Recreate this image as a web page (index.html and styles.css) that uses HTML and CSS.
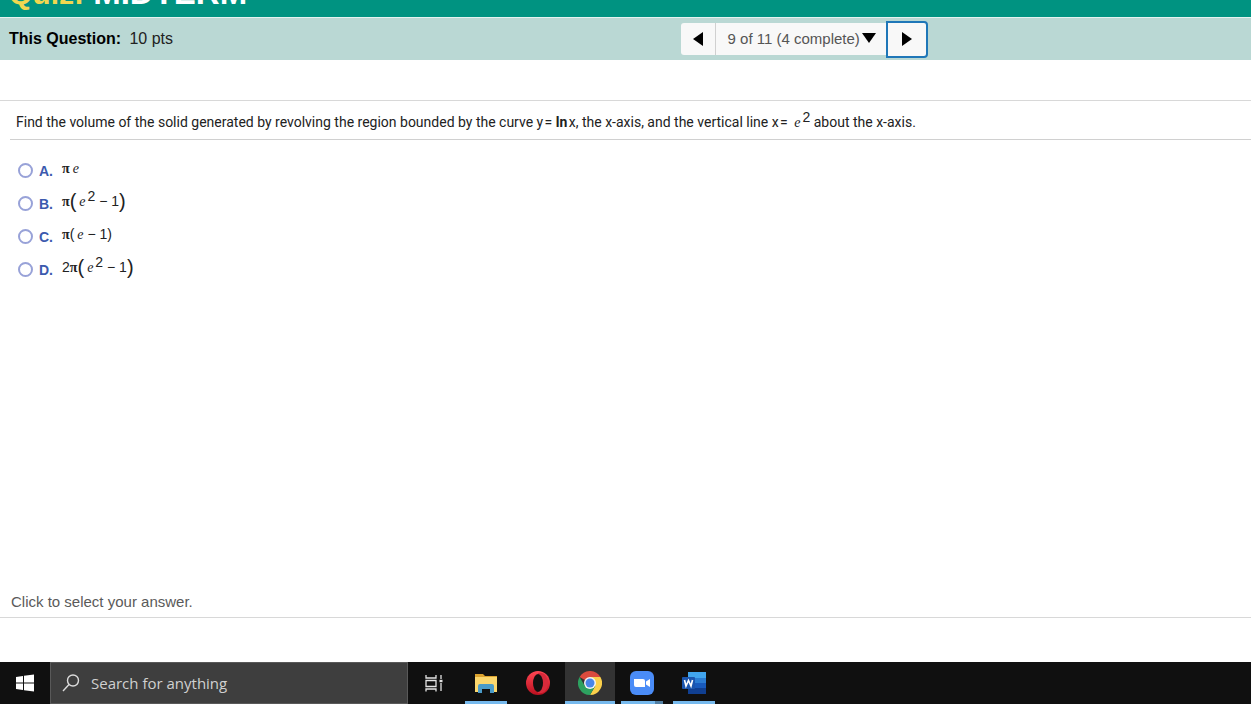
FILE: index.html
```html
<!DOCTYPE html>
<html lang="en">
  <head>
    <meta charset="UTF-8" />
    <meta name="viewport" content="width=device-width, initial-scale=1.0" />
    <title>Quiz: MIDTERM</title>
    <link rel="stylesheet" href="styles.css">
  </head>
  <body>
    <header class="quiz-header">
      <h1><span class="quiz-label">Quiz:</span> MIDTERM</h1>
    </header>

    <div class="question-bar">
      <p class="question-points"><strong>This Question:</strong> 10 pts</p>
      <nav class="question-nav">
        <button type="button" class="nav-prev" aria-label="Previous question">
          <svg width="10" height="14" viewBox="0 0 10 14"><path d="M10 0v14L0 7z" /></svg>
        </button>
        <button type="button" class="nav-list">
          9 of 11 (4 complete)
          <svg width="14" height="10" viewBox="0 0 14 10"><path d="M0 0h14L7 10z" /></svg>
        </button>
        <button type="button" class="nav-next" aria-label="Next question">
          <svg width="10" height="14" viewBox="0 0 10 14"><path d="M0 0v14l10-7z" /></svg>
        </button>
      </nav>
    </div>

    <main class="question">
      <p class="question-text">
        Find the volume of the solid generated by revolving the region bounded by the curve y&#8202;= <b>ln</b>&#8202;x, the x-axis, and the vertical line x&#8202;= <i>e</i><sup>2</sup> about the x-axis.
      </p>

      <form class="choices">
        <div class="choice">
          <input type="radio" name="answer" id="choiceA" />
          <label for="choiceA"><b>A.</b> <span class="math"><span class="pi">π</span><i>e</i></span></label>
        </div>
        <div class="choice">
          <input type="radio" name="answer" id="choiceB" />
          <label for="choiceB"><b>B.</b> <span class="math"><span class="pi">π</span><span class="paren">(</span><i>e</i><sup>2</sup> − 1<span class="paren">)</span></span></label>
        </div>
        <div class="choice">
          <input type="radio" name="answer" id="choiceC" />
          <label for="choiceC"><b>C.</b> <span class="math"><span class="pi">π</span>(<i>e</i> − 1)</span></label>
        </div>
        <div class="choice">
          <input type="radio" name="answer" id="choiceD" />
          <label for="choiceD"><b>D.</b> <span class="math">2<span class="pi">π</span><span class="paren">(</span><i>e</i><sup>2</sup> − 1<span class="paren">)</span></span></label>
        </div>
      </form>

      <p class="hint">Click to select your answer.</p>
    </main>

    <footer class="taskbar">
      <button type="button" class="start" aria-label="Start">
        <svg width="18" height="18" viewBox="0 0 18 18" fill="#fff">
          <path d="M0 3l7-1v6.500H0zM8 1.800L18 .5v8H8zM0 9.500h7V16l-7-1zM8 9.500h10v8L8 16.200z" />
        </svg>
      </button>
      <div class="search">
        <label for="search" aria-label="Search">
          <svg width="18" height="18" viewBox="0 0 18 18" fill="none" stroke="#dcdcdc" stroke-width="1.400">
            <circle cx="11" cy="6.500" r="5.500" />
            <path d="M7 10.500L1 17" />
          </svg>
        </label>
        <input type="text" id="search" placeholder="Search for anything" />
      </div>
      <div class="apps">
        <button type="button" class="app" aria-label="Task View">
          <svg width="20" height="20" viewBox="0 0 20 20" fill="none" stroke="#e4e4e4" stroke-width="1.300">
            <path d="M2 2v3h10V2M2 7.500h10v6H2zM2 18.500v-2.500h10v2.500M17 2v4M17 10v8" />
            <path d="M15.500 8h3" stroke-width="2.400" />
          </svg>
        </button>
        <button type="button" class="app open" aria-label="File Explorer">
          <svg width="24" height="20" viewBox="0 0 24 20">
            <path d="M1 1h8l2 2h12v3H1z" fill="#dca32f" />
            <path d="M1 4h22v15H1z" fill="#fbd76d" />
            <path d="M4 20v-7q0-2 2-2h12q2 0 2 2v7h-4v-4H8v4z" fill="#4a9bc9" />
            <path d="M8 16h8v4H8z" fill="#101010" />
          </svg>
        </button>
        <button type="button" class="app" aria-label="Opera">
          <svg width="24" height="24" viewBox="0 0 24 24">
            <defs>
              <linearGradient id="operaRed" x2="0" y2="1">
                <stop stop-color="#ff4653" />
                <stop offset="1" stop-color="#b9101f" />
              </linearGradient>
            </defs>
            <circle cx="12" cy="12" r="12" fill="url(#operaRed)" />
            <path d="M12 2q5-1 8 3a10 12 0 0 1 0 14q-3 4-8 3z" fill="#d72a3b" />
            <ellipse cx="12" cy="12" rx="5" ry="9" fill="#101010" />
          </svg>
        </button>
        <button type="button" class="app open active" aria-label="Chrome">
          <svg width="24" height="24" viewBox="0 0 24 24">
            <path d="M12 12L1.600 6A12 12 0 0 1 22.400 6z" fill="#db4b3e" />
            <path d="M12 6h10.400A12 12 0 0 1 12 24l5.200-9z" fill="#fbd04b" />
            <path d="M6.800 15L1.600 6A12 12 0 0 0 12 24l5.200-9z" fill="#2da160" />
            <circle cx="12" cy="12" r="6" fill="#f4f4f4" />
            <circle cx="12" cy="12" r="4.500" fill="#4a86e8" />
          </svg>
        </button>
        <button type="button" class="app open stacked" aria-label="Zoom">
          <svg width="24" height="24" viewBox="0 0 24 24">
            <rect width="24" height="24" rx="6" fill="#4a8cf7" />
            <path d="M4 8h9q2 0 2 2v6H6q-2 0-2-2z" fill="#fff" />
            <path d="M16 10.500L20 8v8l-4-2.500z" fill="#fff" />
          </svg>
        </button>
        <button type="button" class="app open" aria-label="Word">
          <svg width="24" height="24" viewBox="0 0 24 24">
            <path d="M6 1h18v6H6z" fill="#41a5ee" />
            <path d="M6 7h18v5H6z" fill="#2b7cd3" />
            <path d="M6 12h18v5H6z" fill="#185abd" />
            <path d="M6 17h18v6H6z" fill="#103f91" />
            <rect y="6" width="13" height="12" rx="1" fill="#1b55ae" />
            <path d="M2.500 9l1.500 6L6.500 9.500 9 15l1.500-6" fill="none" stroke="#fff" stroke-width="1.600" />
          </svg>
        </button>
      </div>
    </footer>
  </body>
</html>
```

FILE: styles.css
```css
* {
  box-sizing: border-box;
}

body {
  display: flex;
  flex-direction: column;
  min-height: 100vh;
  margin: 0;
  background-color: #fff;
  color: #222;
  font-family: "Liberation Sans", Arial, sans-serif;
}

h1,
p {
  margin: 0;
}

button {
  display: flex;
  align-items: center;
  justify-content: center;
  padding: 0;
  border: none;
  background: none;
  font-family: inherit;
  cursor: pointer;
}

/* Title is scrolled most of the way out of the header */
.quiz-header {
  display: flex;
  align-items: flex-end;
  height: 17px;
  padding: 0 9px 3px;
  overflow: hidden;
  background-color: #009381;
  color: #fff;
}

.quiz-header h1 {
  font-size: 33px;
  line-height: 40px;
}

.quiz-label {
  color: #f0d750;
  font-size: 30px;
}

.question-bar {
  display: flex;
  align-items: center;
  height: 43px;
  border-top: 1px solid #e4f3f0;
  background-color: #bad8d4;
}

.question-points {
  flex: 0 0 54%;
  padding-left: 9px;
  font-size: 16px;
}

.question-points strong {
  margin-right: 4px;
  color: #000;
}

.question-nav {
  display: flex;
  align-items: center;
  margin-left: 5px;
}

.question-nav button {
  height: 32px;
  background-color: #f8f8f8;
}

.question-nav .nav-prev {
  width: 35px;
  border-right: 1px solid #d0d0d0;
  border-radius: 3px 0 0 3px;
}

.question-nav .nav-list {
  gap: 2px;
  padding: 0 10px 2px 12px;
  color: #555;
  font-size: 15px;
}

.question-nav .nav-next {
  width: 42px;
  height: 37px;
  border: 2px solid #1f77b8;
  border-radius: 0 4px 4px 0;
}

.question {
  display: flex;
  flex: 1;
  flex-direction: column;
  margin: 40px 0 44px;
  border-top: 1px solid #d8d8d8;
  border-bottom: 1px solid #d8d8d8;
}

.question-text {
  margin-left: 10px;
  padding: 10px 6px 5px;
  border-bottom: 1px solid #d0d0d0;
  font-family: Roboto, "Liberation Sans", sans-serif;
  font-size: 14px;
  line-height: 23px;
}

i,
.pi {
  font-family: "Liberation Serif", "Times New Roman", serif;
}

i {
  margin-left: 3px;
}

sup {
  margin-left: 2px;
  font-family: "Liberation Sans", Arial, sans-serif;
  font-size: 14px;
  line-height: 0;
  vertical-align: 5px;
}

.choices {
  padding: 14px 18px;
}

.choice {
  display: flex;
  align-items: center;
  gap: 6px;
  height: 33px;
}

.choice input {
  width: 15px;
  height: 15px;
  margin: 0;
  border: 2px solid #98a2d8;
  border-radius: 50%;
  background-color: #fff;
  appearance: none;
}

.choice input:checked {
  background-color: #3f5bb0;
}

.choice label {
  display: flex;
  align-items: center;
}

.choice b {
  width: 23px;
  color: #3c5aae;
  font-size: 14px;
}

.math {
  padding-bottom: 4px;
  font-size: 14px;
  line-height: 20px;
}

.pi {
  font-weight: bold;
}

.paren {
  font-size: 20px;
  line-height: 0;
  vertical-align: -2px;
}

.hint {
  margin-top: auto;
  padding: 0 11px 6px;
  color: #5a5a5a;
  font-size: 15px;
  line-height: 18px;
}

.taskbar {
  display: flex;
  height: 42px;
  background-color: #101010;
}

.start {
  width: 50px;
}

.search {
  display: flex;
  flex: 0 1 358px;
  align-items: center;
  gap: 11px;
  padding-left: 11px;
  border: 1px solid #595959;
  background-color: #3e3e3e;
}

.search label {
  display: flex;
}

.search input {
  flex: 1;
  min-width: 0;
  padding: 0;
  border: none;
  outline: none;
  background: none;
  color: #d0d0d0;
  font-family: "Open Sans", "Noto Sans", sans-serif;
  font-size: 15px;
}

.search input::placeholder {
  color: #d0d0d0;
  opacity: 1;
}

.apps {
  display: flex;
  gap: 2px;
  margin-left: 1px;
}

.app {
  position: relative;
  width: 50px;
}

.app.active {
  background-color: #333;
}

.app.open::after {
  position: absolute;
  right: 4px;
  bottom: 0;
  left: 4px;
  height: 3px;
  background-color: #76b9ed;
  content: "";
}

.app.active::after {
  right: 0;
  left: 0;
}

.app.stacked::after {
  border-right: 8px solid #527fa3;
}
```
